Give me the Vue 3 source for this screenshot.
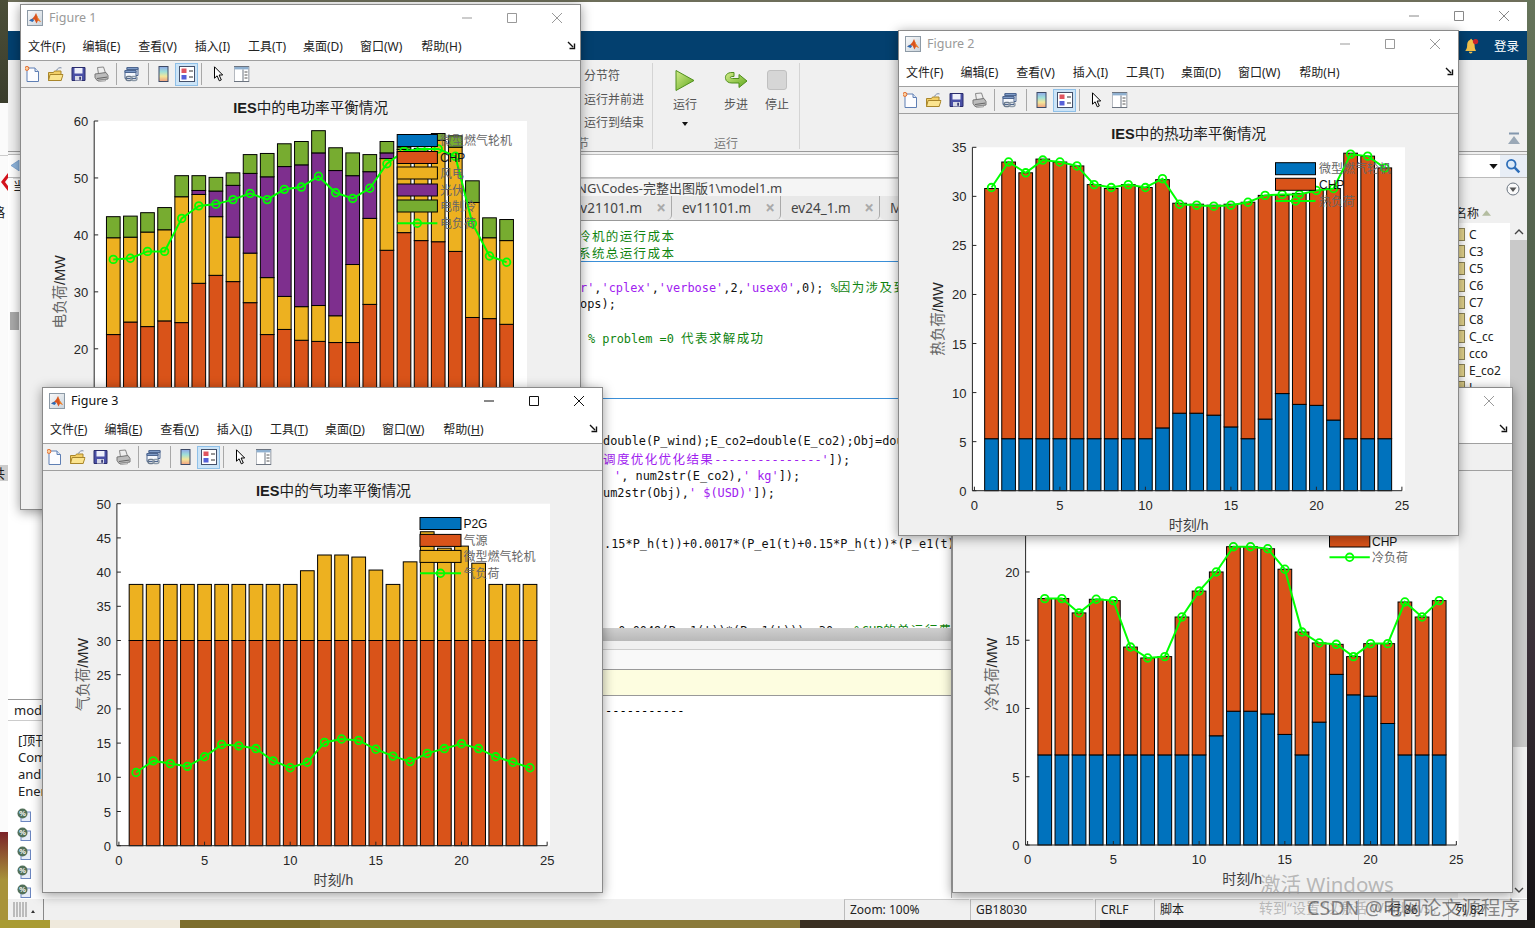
<script setup>
const menus = [['文件', 'F', 17], ['编辑', 'E', 18], ['查看', 'V', 18], ['插入', 'I', 18], ['工具', 'T', 17], ['桌面', 'D', 17], ['窗口', 'W', 19], ['帮助', 'H', 0]]

const O = '#D95319', Y = '#EDB120', P = '#7E2F8E', G = '#77AC30', B = '#0072BD'

function buildFig(c) {
  const scale = (c.zero - c.top) / c.ymax
  const ypx = v => c.zero - v * scale
  const bw = c.unit * 0.8
  const cx = i => c.x0 + (i + 1) * c.unit
  const rects = []
  c.stacks.forEach((st, i) => {
    let prev = 0
    st.forEach((v, k) => {
      if (v > prev) {
        rects.push({ x: cx(i) - bw / 2, y: ypx(v), w: bw, h: (v - prev) * scale, fill: c.colors[k] })
        prev = v
      }
    })
  })
  const pts = c.load.map((v, i) => ({ x: cx(i), y: ypx(v) }))
  const yTicks = []
  for (let v = 0; v <= c.ymax; v += c.ystep) yTicks.push({ v, y: ypx(v) })
  const xTicks = [0, 5, 10, 15, 20, 25].map(v => ({ v, x: c.x0 + v * c.unit }))
  return {
    ...c,
    rects,
    pts,
    poly: pts.map(p => p.x.toFixed(1) + ',' + p.y.toFixed(1)).join(' '),
    yTicks,
    xTicks,
    axis: c.x0 - 2,
    mid: (c.x0 - 2 + c.right) / 2,
    midY: (c.top + c.zero) / 2,
    view: `${c.x + 1} ${c.y + 84} 559 421`,
    winStyle: { left: c.x + 'px', top: c.y + 'px' }
  }
}

const figs = [
  buildFig({
    id: 1, name: 'Figure 1', x: 20, y: 4, x0: 96.2, unit: 17.1, top: 121, zero: 462.7, right: 527, ymax: 60, ystep: 10,
    title: '中的电功率平衡情况', ylab: '电负荷', colors: [O, Y, P, G],
    stacks: [[22.5,39.5,0,43.2],[24.7,39.6,0,43.3],[23.9,40.5,0,43.9],[24.9,40.9,0,44.8],[24.6,46.7,0,50.4],[31.5,47.1,47.8,50.4],[32.9,43.2,47.7,50.1],[31.8,39.6,48.7,50.9],[28.1,36.8,50.8,54.1],[22.5,32.5,50.2,54.3],[23.4,29.2,52,56],[21.5,27.4,52.3,56.4],[21.3,27.6,54.4,58.3],[21.1,25.8,51.3,55.3],[21.1,34.8,50.4,54.4],[27.8,42.9,51.1,54.1],[37.3,53.4,54.4,56.4],[40.4,55,0,55.4],[39,53,0,55.2],[38.8,56.6,0,57.8],[37.1,55.4,0,57.4],[25.5,45.7,0,49.5],[25.3,39.5,0,43],[24.3,39,0,42.7]],
    load: [35.7,35.9,37.1,37.1,42.9,45.1,45.4,46.2,47.3,46.2,48,48.4,50.3,47.4,46.4,48.2,52.5,54.7,55.1,55.1,53.8,42,36.3,35.2],
    lx: [397.2, 437.4], ltx: 440,
    legend: [{ t: '微型燃气轮机', y: 140.5, c: B }, { t: 'CHP', y: 157.5, c: O, dark: 1 }, { t: '风电', y: 173, c: Y }, { t: '光伏', y: 190, c: P }, { t: '电制冷', y: 206, c: G }, { t: '电负荷', y: 223.3 }]
  }),
  buildFig({
    id: 4, name: 'Figure 4', x: 952, y: 387, x0: 1027.6, unit: 17.15, top: 503.7, zero: 845, right: 1458.6, ymax: 25, ystep: 5,
    title: '中的冷功率平衡情况', ylab: '冷负荷', colors: [B, O],
    stacks: [[6.6,18.05],[6.6,18.05],[6.6,17],[6.6,18],[6.6,17.9],[6.6,14.5],[6.6,13.7],[6.6,13.8],[6.6,16.7],[6.6,18.6],[8,20],[9.8,21.85],[9.8,21.85],[9.6,21.7],[8.1,20.2],[6.6,15.6],[9,14.8],[12.5,14.7],[11,13.8],[10.9,14.75],[8.9,14.75],[6.6,17.8],[6.6,16.7],[6.6,17.9]],
    load: [18.05,18.05,17,18,17.9,14.5,13.7,13.8,16.7,18.6,20,21.85,21.85,21.7,20.2,15.6,14.8,14.7,13.8,14.75,14.75,17.8,16.7,17.9],
    lx: [1329.5, 1369.8], ltx: 1372,
    legend: [{ t: '微型燃气轮机', y: 525, c: B }, { t: 'CHP', y: 541, c: O, dark: 1 }, { t: '冷负荷', y: 557.3 }]
  }),
  buildFig({
    id: 3, name: 'Figure 3', active: true, x: 42, y: 387, x0: 118.9, unit: 17.13, top: 503.7, zero: 845.7, right: 550, ymax: 50, ystep: 5,
    title: '中的气功率平衡情况', ylab: '气负荷', colors: [O, Y],
    stacks: [[30,38.2],[30,38.2],[30,38.2],[30,38.2],[30,38.2],[30,38.2],[30,38.2],[30,38.2],[30,38.2],[30,38.2],[30,40.2],[30,42.5],[30,42.5],[30,42.2],[30,40.3],[30,38.2],[30,41.5],[30,45.9],[30,43.5],[30,43.8],[30,41.3],[30,38.2],[30,38.2],[30,38.2]],
    load: [10.7,12.4,12,11.6,13,14.8,14.6,14.2,12.4,11.4,12.2,15.1,15.6,15.4,14.1,13.1,12.3,13.5,14.2,14.9,14.2,13,12.2,11.4],
    lx: [420, 461], ltx: 463.4,
    legend: [{ t: 'P2G', y: 523.5, c: B, dark: 1 }, { t: '气源', y: 540.4, c: O }, { t: '微型燃气轮机', y: 556.4, c: Y }, { t: '气负荷', y: 573.3 }]
  }),
  buildFig({
    id: 2, name: 'Figure 2', x: 898, y: 30, x0: 974.4, unit: 17.1, top: 147.3, zero: 490.7, right: 1405, ymax: 35, ystep: 5,
    title: '中的热功率平衡情况', ylab: '热负荷', colors: [B, O],
    stacks: [[5.3,30.8],[5.3,33.5],[5.3,32.4],[5.3,33.8],[5.3,33.5],[5.3,33.1],[5.3,31.2],[5.3,30.8],[5.3,31.2],[5.3,30.9],[6.4,31.7],[7.9,29.3],[7.9,29.2],[7.7,29.1],[6.5,29.2],[5.3,29.4],[7.3,30.1],[9.9,30.1],[8.8,30.3],[8.7,30.6],[7.2,30.8],[5.3,34.4],[5.3,34.1],[5.3,32.9]],
    load: [30.9,33.5,32.4,33.7,33.5,33.1,31.2,30.9,31.2,30.9,31.8,29.2,29.1,29,29.1,29.4,30.1,30.2,30.2,30.6,30.8,34.3,34.1,32.9],
    lx: [1275.5, 1315.5], ltx: 1319,
    legend: [{ t: '微型燃气轮机', y: 168.7, c: B }, { t: 'CHP', y: 184.3, c: O, dark: 1 }, { t: '热负荷', y: 201 }]
  })
]

const g = 'g', s = 's', gc = 'g cj', sc = 's cj'
const lines = [
  { pad: 10, parts: [[gc, '冷机的运行成本']] },
  { pad: 10, rule: 1, parts: [[gc, '系统总运行成本']] },
  {},
  { pad: 12, parts: [[s, "r'"], ['', ','], [s, "'cplex'"], ['', ','], [s, "'verbose'"], ['', ',2,'], [s, "'usex0'"], ['', ',0); '], [g, '%'], [gc, '因为涉及到']] },
  { pad: 12, parts: [['', 'ops);']] },
  {},
  { pad: 20, parts: [[g, '% problem =0 '], [gc, '代表求解成功']] },
  {}, {},
  { rule: 1 },
  {}, {},
  { pad: 35, parts: [['', 'double(P_wind);E_co2=double(E_co2);Obj=double(Obj);']] },
  { pad: 35, parts: [[sc, '调度优化优化结果'], [s, "---------------'"], ['', ']);']] },
  { pad: 46, parts: [[s, "'"], ['', ', num2str(E_co2),'], [s, "' kg'"], ['', ']);']] },
  { pad: 35, parts: [['', 'um2str(Obj),'], [s, "' $(USD)'"], ['', ']);']] },
  {}, {},
  { pad: 36, parts: [['', '.15*P_h(t))+0.0017*(P_e1(t)+0.15*P_h(t))*(P_e1(t))']] },
  {}, {}, {}, {},
  { pad: 36, parts: [['', '. 0.0049(P_e1(t))*(P_e1(t))). 30;  '], [g, '%CHP'], [gc, '的单运行费']] }
]

const vars = ['C', 'C3', 'C5', 'C6', 'C7', 'C8', 'C_cc', 'cco', 'E_co2', 'L']
const pct = [1, 2, 3, 4, 5]
</script>

<template>
  <div class="desktop">
    <svg class="defs" width="0" height="0" aria-hidden="true">
      <defs>
        <linearGradient id="cb" x1="0" y1="0" x2="0" y2="1">
          <stop offset="0" stop-color="#8fa8e8" />
          <stop offset=".35" stop-color="#9fe0d8" />
          <stop offset=".65" stop-color="#f3e79a" />
          <stop offset="1" stop-color="#f0a080" />
        </linearGradient>
        <linearGradient id="logo" x1="0" y1="0" x2="1" y2="1">
          <stop offset="0" stop-color="#fafafa" />
          <stop offset="1" stop-color="#c9d3dc" />
        </linearGradient>
        <linearGradient id="play" x1="0" y1="0" x2="1" y2="1">
          <stop offset="0" stop-color="#d3ec8a" />
          <stop offset="1" stop-color="#5fa81e" />
        </linearGradient>
      </defs>
      <symbol id="i-new" viewBox="0 0 16 16">
        <path d="M2.500 2h8l3.500 3.500v10h-11.500z" fill="#fdfdff" stroke="#5f7fb4" />
        <path d="M10.500 2v3.500h3.500" fill="#dfe7f3" stroke="#5f7fb4" />
        <circle cx="2.400" cy="2.400" r="2" fill="#fbd0a0" stroke="#e2601e" stroke-width=".9" />
      </symbol>
      <symbol id="i-open" viewBox="0 0 16 16">
        <path d="M1 6.500h5l1-1.500h6.500v9.500H1z" fill="#f3cf66" stroke="#a9862b" />
        <path d="M1 14.500l1.600-6h13l-2 6z" fill="#fbe48f" stroke="#a9862b" />
        <path d="M9 4.500c1-2.400 3-3.200 5-2.600" fill="none" stroke="#7b8ca8" />
      </symbol>
      <symbol id="i-save" viewBox="0 0 16 16">
        <path d="M1.500 1.500h13v13h-13z" fill="#4a50a6" stroke="#2a2c6c" />
        <path d="M4 2h8v5.500H4z" fill="#eef0fa" />
        <path d="M4.500 10h7v4.500h-7z" fill="#d8dae6" />
        <path d="M8.800 10.800h1.600v3H8.800z" fill="#2a2c6c" />
      </symbol>
      <symbol id="i-print" viewBox="0 0 16 16">
        <path d="M4 1.500l6-.5 2 6-7 1z" fill="#eee" stroke="#888" />
        <path d="M1.500 8l11-1.500 2 3v3.500l-11 1.500-2-3z" fill="#bcbcbc" stroke="#777" />
        <path d="M3.500 12.500l10-1.400" stroke="#666" />
        <path d="M5 14.500l7-1v1.400l-7 .8z" fill="#ddd" stroke="#888" stroke-width=".6" />
      </symbol>
      <symbol id="i-link" viewBox="0 0 16 16">
        <path d="M3.500 1.500h11v8h-11z" fill="#e8eef8" stroke="#4d6690" />
        <path d="M3.500 1.500h11v2h-11z" fill="#7f9cc8" stroke="#4d6690" />
        <path d="M1.500 4.500h11v8h-11z" fill="#f4f7fc" stroke="#4d6690" />
        <path d="M1.500 4.500h11v2h-11z" fill="#7f9cc8" stroke="#4d6690" />
        <rect x="2.500" y="10.500" width="6" height="4" rx="2" fill="none" stroke="#6b7a8c" stroke-width="1.400" />
        <rect x="7.500" y="10.500" width="6" height="4" rx="2" fill="none" stroke="#8d9aa8" stroke-width="1.400" />
      </symbol>
      <symbol id="i-cbar" viewBox="0 0 16 16">
        <rect x="3.500" y=".5" width="9" height="15" fill="url(#cb)" stroke="#3d4a66" />
      </symbol>
      <symbol id="i-legend" viewBox="0 0 16 16">
        <rect x=".5" y=".5" width="15" height="15" fill="#fff" stroke="#44506a" />
        <rect x="2.500" y="2.500" width="5" height="4.500" fill="#e05560" />
        <rect x="2.500" y="9" width="5" height="4.500" fill="#5560d8" />
        <path d="M10 5h4M10 11h4" stroke="#333" />
      </symbol>
      <symbol id="i-cursor" viewBox="0 0 16 16">
        <path d="M4 .8v11.400l2.600-2.400 2.200 5 2-.9-2.200-4.900h3.600z" fill="#fff" stroke="#000" />
      </symbol>
      <symbol id="i-dock" viewBox="0 0 16 16">
        <rect x=".5" y=".5" width="15" height="15" fill="#fff" stroke="#6c7480" />
        <rect x="1" y="1" width="14" height="2.400" fill="#8fb0d0" />
        <path d="M9.500 3.500v12" stroke="#6c7480" />
        <path d="M11 6h3M11 9h3M11 12h3" stroke="#555" />
      </symbol>
      <symbol id="i-min" viewBox="0 0 12 12"><path d="M1 6h10" stroke="currentColor" fill="none" /></symbol>
      <symbol id="i-max" viewBox="0 0 12 12"><path d="M1.500 1.500h9v9h-9z" stroke="currentColor" fill="none" /></symbol>
      <symbol id="i-close" viewBox="0 0 12 12"><path d="M1 1l10 10M11 1L1 11" stroke="currentColor" fill="none" /></symbol>
      <symbol id="i-logo" viewBox="0 0 16 16">
        <rect x=".5" y=".5" width="15" height="15" fill="url(#logo)" stroke="#8d9aa6" />
        <path d="M2 10.500l3.500-2 2-2.500 1.500-3 2 5 3 4-3-1.500-1.500 3-2-4z" fill="#d9531e" />
        <path d="M2 10.500l3.500-2 1.500 2-1.500 1.500z" fill="#2b6cb8" />
        <path d="M9 3l2 5 3 4-3-1.500z" fill="#f08a2c" />
      </symbol>
      <symbol id="i-arrow" viewBox="0 0 9 9"><path d="M1 1l5 5M7.500 2.500v5h-5" fill="none" stroke="#111" stroke-width="1.400" /></symbol>
    </svg>

    <div class="sliver">
      <div class="sl-line"></div>
      <svg class="sl-red" viewBox="0 0 8 20"><path d="M8 1L1 10l7 9V14L5 10l3-4z" fill="#d3121c" /></svg>
      <span class="sl-char">略</span>
      <span class="sl-char sl-low">共</span>
    </div>

    <div class="matlab">
      <div class="mt-title">
        <svg class="wc"><use href="#i-min" /></svg>
        <svg class="wc"><use href="#i-max" /></svg>
        <svg class="wc"><use href="#i-close" /></svg>
      </div>
      <div class="mt-blue">
        <svg class="bell" viewBox="0 0 18 20">
          <path d="M7 3c-3 1-3.500 4-3.500 7S2 14 1.500 15.500h12C13 14 12 13 12 10s-1-6-3-7c-.500-1.500-1.500-1.500-2 0z" fill="#f2c14a" />
          <path d="M5.500 16.500h4a2 2 0 0 1-4 0z" fill="#f2c14a" />
          <circle cx="13" cy="5" r="3" fill="#c8242a" />
        </svg>
        <span class="login">登录</span>
      </div>
      <div class="strip">
        <div class="st-sec">
          <div class="sec-items">
            <span>分节符</span><span>运行并前进</span><span>运行到结束</span>
          </div>
          <div class="sec-label sec-left">节</div>
        </div>
        <div class="st-run">
          <div class="run-items">
            <div class="run-btn rb-play">
              <svg class="ic-play" viewBox="0 0 20 22"><path d="M1 1l18 10L1 21z" fill="url(#play)" stroke="#4f8f1c" /></svg>
              <span>运行</span>
              <i class="caret"></i>
            </div>
            <div class="run-btn rb-step">
              <svg class="ic-step" viewBox="0 0 24 20"><path d="M8 3C3 3 1 6 1.500 9c.5 3 3 4.500 6.500 4.500h7V18l8-6.500L15 5v4H8.500C6 9 5.500 7 8 7h2V3z" fill="url(#play)" stroke="#4f8f1c" /></svg>
              <span>步进</span>
            </div>
            <div class="run-btn rb-stop">
              <span class="ic-stop"></span>
              <span>停止</span>
            </div>
          </div>
          <div class="sec-label">运行</div>
        </div>
        <div class="st-rest">
          <svg class="collapse" viewBox="0 0 14 14"><path d="M2 1.500h10" stroke="#8397ad" stroke-width="2" /><path d="M7 4l6 8H1z" fill="#9aa8b6" /></svg>
        </div>
      </div>
      <div class="addr">
        <svg class="drop" viewBox="0 0 10 6"><path d="M0 0h10L5 6z" fill="#111" /></svg>
        <div class="search">
          <svg viewBox="0 0 14 14"><circle cx="8.500" cy="5.500" r="3.800" fill="#dceaf8" stroke="#2b6cb8" stroke-width="1.500" /><path d="M5.500 8.500L1.500 12.500" stroke="#2b6cb8" stroke-width="2.200" /></svg>
        </div>
      </div>
      <div class="body">
        <div class="left">
          <div class="left-top">
            <svg class="back" viewBox="0 0 10 12"><path d="M9 0v12L0 6z" fill="#8fb6de" stroke="#5e8cc0" stroke-width=".6" /></svg>
            <span class="cur">当前</span>
            <div class="thumb"></div>
          </div>
          <div class="left-tab">model1.m</div>
          <div class="left-desc">
            <div>[顶刊复现]</div><div>Combined</div><div>and</div><div>Energy</div>
          </div>
          <div class="left-list">
            <svg v-for="p in pct" :key="p" class="pct" viewBox="0 0 14 14">
              <rect x="4" y="4" width="9.500" height="9.500" fill="#e6ecf8" stroke="#6b86c0" />
              <circle cx="5.500" cy="5.500" r="5" fill="#52705a" />
              <text x="5.500" y="8" class="pct-t">%</text>
            </svg>
          </div>
        </div>

        <div class="editor">
          <div class="path">NG\Codes-完整出图版1\model1.m</div>
          <div class="tabs">
            <div class="tab t-first">ev21101.m<b>×</b></div>
            <div class="tab t-wide">ev11101.m<b>×</b></div>
            <div class="tab">ev24_1.m<b>×</b></div>
            <div class="tab">M</div>
          </div>
          <div class="code">
            <div v-for="(l, i) in lines" :key="i" class="ln" :class="{ rule: l.rule }" :style="{ paddingLeft: (l.pad || 0) + 'px' }">
              <span v-for="(p, j) in l.parts || []" :key="j" :class="p[0]">{{ p[1] }}</span>
            </div>
          </div>
          <div class="ed-scroll"></div>
          <div class="ed-gap"></div>
          <div class="cmd-head"></div>
          <div class="cmd-yellow"></div>
          <div class="cmd">
            <div class="dash">-----------</div>
          </div>
        </div>

        <div class="work">
          <div class="w-top">
            <svg class="w-circle" viewBox="0 0 14 14"><circle cx="7" cy="7" r="6" fill="#fafafa" stroke="#6a7480" /><path d="M3.500 5.500h7L7 10z" fill="#555" /></svg>
          </div>
          <div class="w-head"><span>名称</span><svg viewBox="0 0 10 6"><path d="M5 0l5 6H0z" fill="#b4bda0" /></svg></div>
          <div class="w-main">
            <div class="w-list">
              <div v-for="v in vars" :key="v" class="w-row"><i></i>{{ v }}</div>
            </div>
            <div class="w-scroll">
              <svg viewBox="0 0 10 6"><path d="M1 5l4-4 4 4" fill="none" stroke="#444" stroke-width="1.400" /></svg>
              <div class="w-thumb"></div>
              <div class="w-rest"></div>
              <svg viewBox="0 0 10 6"><path d="M1 1l4 4 4-4" fill="none" stroke="#444" stroke-width="1.400" /></svg>
            </div>
          </div>
        </div>
      </div>
      <div class="status">
        <div class="grip"><i></i><i></i><i></i><i></i><i></i><em></em></div>
        <div class="cell c-zoom">Zoom: 100%</div>
        <div class="cell c-enc">GB18030</div>
        <div class="cell c-crlf">CRLF</div>
        <div class="cell c-type">脚本</div>
        <div class="cell c-ln">行 86</div>
        <div class="cell c-col">列 82</div>
      </div>
    </div>

    <section v-for="f in figs" :key="f.id" class="fig" :class="{ active: f.active }" :style="f.winStyle">
      <header class="f-title">
        <svg class="f-logo"><use href="#i-logo" /></svg>
        <span class="f-name">{{ f.name }}</span>
        <div class="f-ctrls">
          <svg><use href="#i-min" /></svg>
          <svg><use href="#i-max" /></svg>
          <svg><use href="#i-close" /></svg>
        </div>
      </header>
      <nav class="f-menu">
        <span v-for="m in menus" :key="m[0]" :style="{ marginRight: m[2] + 'px' }">{{ m[0] }}(<u>{{ m[1] }}</u>)</span>
        <svg class="f-arrow"><use href="#i-arrow" /></svg>
      </nav>
      <div class="f-tools">
        <svg class="tb"><use href="#i-new" /></svg>
        <svg class="tb"><use href="#i-open" /></svg>
        <svg class="tb"><use href="#i-save" /></svg>
        <svg class="tb"><use href="#i-print" /></svg>
        <i class="sep s1"></i>
        <svg class="tb"><use href="#i-link" /></svg>
        <i class="sep s2"></i>
        <svg class="tb"><use href="#i-cbar" /></svg>
        <span class="tb-on"><svg><use href="#i-legend" /></svg></span>
        <i class="sep s3"></i>
        <svg class="tb"><use href="#i-cursor" /></svg>
        <svg class="tb"><use href="#i-dock" /></svg>
      </div>
      <svg class="plot" :viewBox="f.view">
        <rect :x="f.axis" :y="f.top" :width="f.right - f.axis" :height="f.zero - f.top" fill="#fff" />
        <rect v-for="(r, i) in f.rects" :key="i" :x="r.x" :y="r.y" :width="r.w" :height="r.h" :fill="r.fill" stroke="#000" stroke-width="1" />
        <path :d="`M${f.axis} ${f.top}V${f.zero}H${f.xTicks[5].x}`" fill="none" stroke="#262626" stroke-width="1" />
        <g stroke="#262626">
          <line v-for="t in f.yTicks" :key="'y' + t.v" :x1="f.axis" :x2="f.axis + 4" :y1="t.y" :y2="t.y" />
          <line v-for="t in f.xTicks" :key="'x' + t.v" :x1="t.x" :x2="t.x" :y1="f.zero" :y2="f.zero - 4" />
        </g>
        <text v-for="t in f.yTicks" :key="'yl' + t.v" class="tick" text-anchor="end" :x="f.axis - 6" :y="t.y + 5">{{ t.v }}</text>
        <text v-for="t in f.xTicks" :key="'xl' + t.v" class="tick" text-anchor="middle" :x="t.x" :y="f.zero + 19">{{ t.v }}</text>
        <text class="ftitle" text-anchor="middle" :x="f.mid" :y="f.top - 8"><tspan class="ies">IES</tspan>{{ f.title }}</text>
        <text class="xlab" text-anchor="middle" :x="f.mid" :y="f.zero + 39">时刻/h</text>
        <text class="ylab" text-anchor="middle" :transform="`translate(${f.axis - 29} ${f.midY}) rotate(-90)`">{{ f.ylab }}<tspan class="mw">/MW</tspan></text>
        <polyline :points="f.poly" fill="none" stroke="#00ff00" stroke-width="2" />
        <circle v-for="(p, i) in f.pts" :key="'c' + i" :cx="p.x" :cy="p.y" r="3.800" fill="none" stroke="#00ff00" stroke-width="1.800" />
        <g v-for="l in f.legend" :key="l.t">
          <rect v-if="l.c" :x="f.lx[0]" :y="l.y - 6" :width="f.lx[1] - f.lx[0]" height="12" :fill="l.c" stroke="#000" stroke-width="1" />
          <template v-else>
            <line :x1="f.lx[0]" :x2="f.lx[1]" :y1="l.y" :y2="l.y" stroke="#00ff00" stroke-width="2" />
            <circle :cx="(f.lx[0] + f.lx[1]) / 2" :cy="l.y" r="3.800" fill="none" stroke="#00ff00" stroke-width="1.800" />
          </template>
          <text class="ltext" :class="{ dark: l.dark }" :x="f.ltx" :y="l.y + 4.500">{{ l.t }}</text>
        </g>
      </svg>
    </section>

    <div class="wm wm-a">激活 Windows</div>
    <div class="wm wm-b">转到“设置”以激活 Windows。</div>
    <div class="wm wm-c">CSDN @电网论文源程序</div>
  </div>
</template>

<style>
html, body { margin: 0; padding: 0; overflow: hidden; }
</style>

<style scoped>
.desktop {
  position: relative;
  width: 1535px;
  height: 928px;
  overflow: hidden;
  font-family: "Noto Sans", "Noto Sans CJK SC", sans-serif;
  color: #222;
  background:
    linear-gradient(90deg, #a99b33 0 50px, #efe9dc 50px 180px, #7c6d2c 180px 320px, #8a7a3a 320px 800px, #3a2f22 800px 1100px, #1d1a18 1100px) bottom / 100% 8px no-repeat,
    linear-gradient(180deg, #66745a 0, #4b5a48 40%, #3a2f38 70%, #141214 100%) right / 10px 100% no-repeat,
    linear-gradient(180deg, #4b4e38 0, #3a3d2c 103px, #7a2228 832px, #a8933a 880px) left / 8px 100% no-repeat,
    #6d6e5a;
}
.defs { position: absolute; }

.sliver {
  position: absolute;
  left: 0;
  top: 103px;
  width: 8px;
  height: 729px;
  background: #fbfbfb;
  overflow: hidden;
  font-size: 13px;
}
.sl-line { height: 52px; border-bottom: 1px solid #ccc; }
.sl-red { display: block; width: 8px; height: 20px; margin-top: 16px; }
.sl-char { display: block; margin: 12px 0 0 -8px; line-height: 16px; }
.sl-low { margin-top: 245px; background: #ccc; }

.matlab {
  position: absolute;
  left: 8px;
  top: 2px;
  width: 1519px;
  height: 918px;
  display: flex;
  flex-direction: column;
  background: #f0f0f0;
  overflow: hidden;
}
.mt-title {
  flex: 0 0 29px;
  box-sizing: border-box;
  background: #fff;
  display: flex;
  justify-content: flex-end;
  align-items: center;
  gap: 33px;
  padding: 0 17px 2px 0;
  color: #888;
}
.wc { width: 12px; height: 12px; }
.mt-blue {
  flex: 0 0 29px;
  background: #03406f;
  display: flex;
  justify-content: flex-end;
  align-items: center;
  padding-right: 8px;
}
.bell { width: 16px; height: 18px; margin-right: 14px; }
.login { color: #fff; font-size: 12.500px; }

.strip {
  flex: 0 0 92px;
  display: flex;
  padding-left: 572px;
  border-bottom: 1px solid #9a9a9a;
  box-sizing: border-box;
  font-size: 12px;
  color: #555;
}
.st-sec, .st-run { display: flex; flex-direction: column; border-right: 1px solid #d4d4d4; margin: 3px 0 2px; }
.st-sec { width: 72px; }
.st-run { width: 146px; align-items: center; }
.sec-items { flex: 1; display: flex; flex-direction: column; padding: 5px 0 0 4px; gap: 7px; line-height: 16.500px; white-space: nowrap; }
.sec-label { height: 10px; line-height: 10px; color: #777; }
.sec-left { margin-left: -3px; width: 9px; overflow: visible; }
.run-items { flex: 1; display: flex; align-self: stretch; padding-left: 10px; }
.run-btn { display: flex; flex-direction: column; align-items: center; line-height: 16px; flex: none; }
.rb-play { width: 44px; }
.rb-step { width: 58px; }
.rb-stop { width: 24px; }
.ic-play { width: 20px; height: 23px; margin-top: 6px; }
.ic-step { width: 24px; height: 21px; margin: 6px 0 2px; }
.ic-stop { width: 20px; height: 20px; margin: 7px 0 2px; border-radius: 3px; background: #d6d6d6; border: 1px solid #c0c0c0; box-sizing: border-box; flex: none; }
.run-btn > span:not(.ic-stop) { margin-top: 5px; white-space: nowrap; }
.caret { width: 0; height: 0; margin-top: 9px; border: 3.500px solid transparent; border-top: 4px solid #111; border-bottom: 0; }
.st-rest { flex: 1; display: flex; justify-content: flex-end; align-items: flex-end; padding: 0 6px 5px 0; }
.collapse { width: 14px; height: 14px; }

.addr {
  flex: 0 0 24px;
  margin-top: 2px;
  background: #fff;
  border-top: 1px solid #bbb;
  border-bottom: 1px solid #bbb;
  box-sizing: border-box;
  display: flex;
  justify-content: flex-end;
  align-items: center;
}
.drop { width: 9px; height: 5px; margin-right: 2px; }
.search { width: 27px; height: 100%; background: #e8eef6; display: flex; align-items: center; padding-left: 5px; box-sizing: border-box; }
.search svg { width: 16px; height: 16px; transform: scaleX(-1); }

.body { flex: 1; min-height: 0; display: flex; }
.left { width: 560px; background: #fff; display: flex; flex-direction: column; flex: none; }
.left-top { flex: 1; position: relative; background: #fff; }
.back { position: absolute; left: 3px; top: -18px; width: 9px; height: 11px; }
.cur { position: absolute; left: 5px; top: 0; font-size: 12px; line-height: 16px; border-top: 1px solid #ddd; }
.thumb { position: absolute; left: 2px; top: 134px; width: 9px; height: 18px; background: #aaa; }
.left-tab { height: 20px; line-height: 20px; padding-left: 6px; font-size: 13px; border-top: 1px solid #999; border-bottom: 1px solid #ccc; flex: none; }
.left-desc { padding: 11px 0 2px 10px; font-size: 13px; line-height: 17px; flex: none; }
.left-list { display: flex; flex-direction: column; gap: 5px; padding: 6px 0 0 9px; height: 96px; overflow: hidden; box-sizing: border-box; flex: none; }
.pct { width: 14px; height: 14px; flex: none; }
.pct-t { font: 700 7.500px "Liberation Sans", sans-serif; fill: #fff; text-anchor: middle; }

.editor { width: 383px; flex: none; background: #fff; display: flex; flex-direction: column; border-right: 1px solid #aaa; overflow: hidden; }
.path { height: 18px; flex: none; line-height: 18px; font-size: 13px; color: #444; background: #f5f5f5; padding-left: 9px; border-top: 1px solid #ccc; box-sizing: border-box; white-space: nowrap; }
.tabs { height: 25px; flex: none; display: flex; background: #f0f0f0; border-bottom: 1px solid #999; box-sizing: border-box; }
.tab { position: relative; width: 99px; padding-left: 10px; box-sizing: border-box; line-height: 24px; font-size: 13.500px; color: #444; background: #e8e8e8; border-right: 1px solid #aaa; border-radius: 0 0 5px 5px; flex: none; }
.tab.t-first { width: 104px; padding-left: 5px; }
.tab.t-wide { width: 109px; }
.tab b { position: absolute; right: 5px; top: 0; font-weight: 700; font-size: 17px; color: #aaa; }
.code { height: 407px; flex: none; overflow: hidden; padding-top: 6.500px; box-sizing: border-box; font: 11.900px "DejaVu Sans Mono", "Noto Sans CJK SC", monospace; color: #111; }
.ln { height: 17.170px; line-height: 17.170px; white-space: pre; box-sizing: border-box; }
.ln.rule { border-bottom: 1px solid #3a8fd8; }
.g { color: #108410; }
.s { color: #a020f0; }
.cj { font-size: 12.500px; letter-spacing: 1.400px; }
.ed-scroll { height: 13px; flex: none; background: linear-gradient(#cfcfcf, #b8b8b8); }
.ed-gap { height: 8px; flex: none; background: #f0f0f0; border-bottom: 1px solid #ccc; }
.cmd-head { height: 19px; flex: none; background: #f9f9f9; border-bottom: 1px solid #999; }
.cmd-yellow { height: 25px; flex: none; background: #fdfde0; border-bottom: 1px solid #999; }
.cmd { flex: 1; background: #fff; }
.dash { padding: 7px 0 0 37px; font: 12px/17px "DejaVu Sans Mono", monospace; white-space: pre; color: #000; }

.work { flex: 1; display: flex; flex-direction: column; background: #f0f0f0; min-width: 0; }
.w-top { height: 24px; flex: none; display: flex; justify-content: flex-end; align-items: center; padding-right: 7px; }
.w-circle { width: 14px; height: 14px; margin-top: -3px; }
.w-head { height: 21px; flex: none; padding-left: 503px; display: flex; align-items: center; gap: 3px; font-size: 12px; white-space: nowrap; }
.w-head svg { width: 9px; height: 6px; }
.w-main { flex: 1; min-height: 0; display: flex; padding-left: 506px; }
.w-list { flex: 1; background: #fff; padding-top: 3px; font-size: 12px; overflow: hidden; }
.w-row { height: 17px; line-height: 17px; display: flex; align-items: center; gap: 4px; }
.w-row i { width: 7px; height: 13px; background: #e6d68e; border: 1px solid #8d8458; box-sizing: border-box; flex: none; }
.w-scroll { width: 17px; flex: none; display: flex; flex-direction: column; align-items: center; }
.w-scroll svg { width: 10px; height: 6px; margin: 6px 0 5px; flex: none; }
.w-thumb { width: 100%; height: 507px; flex: none; background: #c9c9c9; }
.w-rest { flex: 1; }

.status { flex: 0 0 22px; display: flex; align-items: stretch; font-size: 12px; background: #f0f0f0; border-top: 1px solid #fff; box-sizing: border-box; }
.grip { width: 30px; display: flex; gap: 1px; padding: 3px 0 3px 5px; align-items: stretch; border-right: 1px solid #888; margin-right: 800px; box-sizing: content-box; position: relative; }
.grip i { width: 2px; background: #bbb; }
.grip em { width: 0; height: 0; margin: 8px 0 0 3px; border: 2px solid transparent; border-bottom: 3px solid #333; border-top: 0; }
.cell { border-left: 1px solid #bbb; border-top: 1px solid #ccc; padding-left: 5px; line-height: 20px; box-sizing: border-box; white-space: nowrap; }
.c-zoom { width: 125px; }
.c-enc { width: 123px; margin-left: 1px; }
.c-crlf { width: 57px; margin-left: 2px; }
.c-type { width: 204px; margin-left: 2px; }
.c-ln { width: 90px; padding-left: 30px; }
.c-col { flex: 1; padding-left: 6px; }

.fig {
  position: absolute;
  width: 561px;
  height: 506px;
  box-sizing: border-box;
  border: 1px solid #8a8a8a;
  background: #f0f0f0;
  box-shadow: 0 2px 11px rgba(0, 0, 0, .4);
  display: flex;
  flex-direction: column;
  overflow: hidden;
}
.f-title {
  flex: 0 0 27px;
  box-sizing: border-box;
  background: #fff;
  display: flex;
  align-items: center;
  padding: 0 0 2px 6px;
  font-size: 12.500px;
  color: #999;
}
.active .f-title { color: #111; }
.f-logo { width: 16px; height: 16px; margin-right: 6px; }
.f-name { flex: 1; }
.f-ctrls { display: flex; gap: 33px; padding-right: 17px; }
.f-ctrls svg { width: 12px; height: 12px; }
.f-menu {
  flex: 0 0 29px;
  box-sizing: border-box;
  background: #fff;
  border-bottom: 1px solid #a0a0a0;
  display: flex;
  align-items: center;
  padding: 0 0 1px 7px;
  font-size: 12px;
  white-space: nowrap;
  color: #222;
}
.f-menu u { text-decoration: none; }
.active .f-menu u { text-decoration: underline; }
.f-arrow { width: 9px; height: 9px; margin-left: auto; margin-right: 4px; }
.f-tools {
  flex: 0 0 27px;
  box-sizing: border-box;
  background: #f0f0f0;
  border-bottom: 1px solid #a0a0a0;
  display: flex;
  align-items: center;
}
.tb { width: 16px; height: 16px; padding: 0 3.500px; flex: none; }
.tb-on { width: 23px; height: 23px; box-sizing: border-box; background: #cce4f7; border: 1px solid #8fc0e8; display: flex; align-items: center; justify-content: center; flex: none; }
.tb-on svg { width: 16px; height: 16px; }
.sep { width: 1px; height: 22px; background: #a8a8a8; flex: none; }
.s1 { margin: 0 3px; }
.s2 { margin: 0 3px 0 5px; }
.s3 { margin: 0 5px 0 3px; }
.plot { flex: none; width: 559px; height: 421px; display: block; }

.tick { font: 13px "Liberation Sans", sans-serif; fill: #262626; }
.ftitle { font: 14.600px "Liberation Sans", "Noto Sans CJK SC", sans-serif; fill: #1c1c1c; }
.ies { font-weight: 700; }
.xlab { font: 14px "Liberation Sans", "Noto Sans CJK SC", sans-serif; fill: #404040; }
.ylab { font: 14.500px "Liberation Sans", "Noto Sans CJK SC", sans-serif; fill: #666; }
.mw { fill: #262626; }
.ltext { font: 12px "Liberation Sans", "Noto Sans CJK SC", sans-serif; fill: #666; }
.ltext.dark { fill: #111; }

.wm { position: absolute; white-space: nowrap; pointer-events: none; }
.wm-a { left: 1260px; top: 869px; font-size: 20.500px; line-height: 30px; color: rgba(150, 150, 150, .65); }
.wm-b { left: 1259px; top: 899px; font-size: 14px; line-height: 18px; color: rgba(160, 160, 160, .7); }
.wm-c { left: 1307px; top: 896px; font-size: 19.700px; line-height: 24px; color: rgba(60, 60, 60, .6); }
</style>
